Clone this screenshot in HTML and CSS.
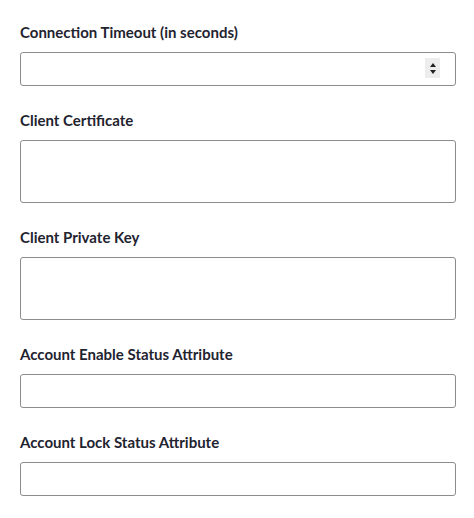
FILE: index.html
```html
<!DOCTYPE html>
<html lang="en">
<head>
    <meta charset="UTF-8">
    <meta name="viewport" content="width=device-width, initial-scale=1.0">
    <title>Connection Settings</title>
    <link rel="stylesheet" href="styles.css">
</head>
<body>
    <div id="settings-panel">
        <form id="settings-form">
            <div class="field">
                <label for="timeout">Connection Timeout (in seconds)</label>
                <div class="number-wrap">
                    <input type="text" id="timeout" name="timeout" class="text-input">
                    <span class="spinner">
                        <span class="arrow-up"></span>
                        <span class="arrow-down"></span>
                    </span>
                </div>
            </div>

            <div class="field">
                <label for="cert">Client Certificate</label>
                <textarea id="cert" name="cert" class="text-area"></textarea>
            </div>

            <div class="field">
                <label for="key">Client Private Key</label>
                <textarea id="key" name="key" class="text-area"></textarea>
            </div>

            <div class="field">
                <label for="enable-attr">Account Enable Status Attribute</label>
                <input type="text" id="enable-attr" name="enable-attr" class="text-input">
            </div>

            <div class="field">
                <label for="lock-attr">Account Lock Status Attribute</label>
                <input type="text" id="lock-attr" name="lock-attr" class="text-input">
            </div>
        </form>
    </div>
</body>
</html>
```

FILE: styles.css
```css
/* CSS styles */
body {
    font-family: Lato, "Noto Sans", sans-serif;
    margin: 0;
    background-color: #fff;
    color: #1f2430;
}

#settings-panel {
    padding: 22px 18px 0 20px;
}

form {
    display: flex;
    flex-direction: column;
}

.field {
    display: flex;
    flex-direction: column;
    margin-bottom: 24px;
}

label {
    font-size: 15px;
    font-weight: bold;
    line-height: 20px;
    margin-bottom: 10px;
}

.text-input,
.text-area {
    box-sizing: border-box;
    width: 436px;
    margin: 0;
    border: 1px solid #8c8c8c;
    border-radius: 3px;
    background-color: #fff;
    font-family: inherit;
    font-size: 14px;
    padding: 6px 10px;
}

.text-input {
    height: 34px;
}

.text-area {
    height: 63px;
    resize: none;
}

.number-wrap {
    position: relative;
    width: 436px;
}

.spinner {
    position: absolute;
    top: 6px;
    right: 16px;
    width: 15px;
    height: 20px;
    background-color: #ededed;
    display: flex;
    flex-direction: column;
    align-items: center;
    justify-content: center;
    gap: 3px;
}

.arrow-up {
    width: 0;
    height: 0;
    border-left: 3px solid transparent;
    border-right: 3px solid transparent;
    border-bottom: 4px solid #222;
}

.arrow-down {
    width: 0;
    height: 0;
    border-left: 3px solid transparent;
    border-right: 3px solid transparent;
    border-top: 4px solid #222;
}
```
